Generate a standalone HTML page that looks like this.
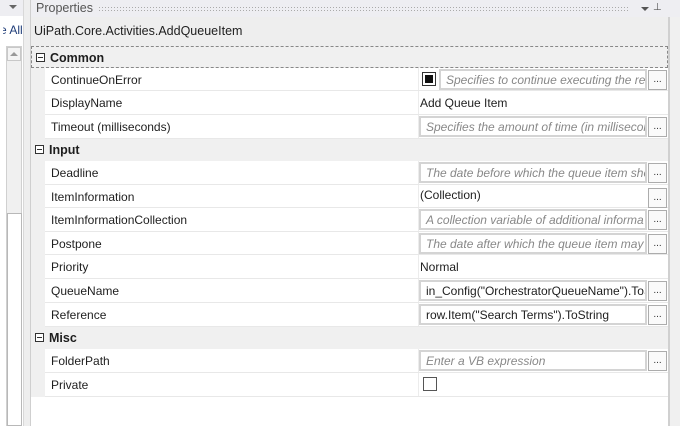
<!DOCTYPE html>
<html><head><style>
*{margin:0;padding:0;box-sizing:border-box}
body{width:680px;height:426px;overflow:hidden;background:#fff;font-family:"Liberation Sans",sans-serif;font-size:12px;color:#1e1e1e;position:relative}
.a{position:absolute}
.row{position:absolute;left:31px;width:637px;}
.hdr{background:#f0f0f0;font-weight:bold;font-size:12.5px}
.hdr .box{position:absolute;left:4px;top:6px;width:9px;height:9px;border:1px solid #333;background:#fff}
.hdr .box:after{content:"";position:absolute;left:1px;top:3px;width:5px;height:1px;background:#333}
.hdr span{position:absolute;left:18px;top:4px}
.prop{background:#fff}
.prop .ind{position:absolute;left:0;top:0;bottom:0;width:14px;background:#f0f0f0}
.prop .name{position:absolute;left:20px;top:5px}
.prop .line{position:absolute;left:14px;right:0;bottom:0;height:1px;background:#e8e8e8}
.prop .sep{position:absolute;left:387px;top:0;bottom:0;width:1px;background:#ececec}
.val{position:absolute;left:389px;top:5px}
.tb{position:absolute;left:388px;top:1px;width:228px;height:21px;border:2px solid #d4d4d4;background:#fff;padding:2px 0 0 5px;white-space:nowrap;overflow:hidden}
.ph{font-style:italic;color:#888}
.btn{position:absolute;left:617px;top:2px;width:19px;height:20px;border:1px solid #acacac;background:#fafafa;font-size:10px;text-align:center;line-height:18px;color:#333}
</style></head><body>
<!-- left panel -->
<div class="a" style="left:0;top:0;width:24px;height:16px;background:#eeeef2"></div>
<div class="a" style="left:9px;top:5px;width:0;height:0;border-left:4px solid transparent;border-right:4px solid transparent;border-top:4px solid #666"></div>
<div class="a" style="left:0;top:23px;font-size:12px;color:#1e3c78">e All</div>
<div class="a" style="left:-5px;top:23px;width:8px;height:14px;background:#fff"></div>
<div class="a" style="left:6px;top:46px;width:16px;height:380px;background:#f0f0f0;border:1px solid #d0d0d0"></div>
<div class="a" style="left:7px;top:47px;width:14px;height:14px;background:#f4f4f4;border:1px solid #c8c8c8"></div>
<div class="a" style="left:10px;top:52px;width:0;height:0;border-left:4px solid transparent;border-right:4px solid transparent;border-bottom:4px solid #999"></div>
<div class="a" style="left:7px;top:213px;width:15px;height:213px;background:#fff;border:1px solid #b8b8b8"></div>
<div class="a" style="left:23px;top:0;width:8px;height:426px;background:#eeeeee;border-left:1px solid #d8d8d8;border-right:1px solid #cfcfcf"></div>
<!-- properties title -->
<div class="a" style="left:31px;top:0;width:649px;height:17px;background:#eeeef2"></div>
<div class="a" style="left:36px;top:1px;font-size:12.5px;color:#555">Properties</div>
<div class="a" style="left:98px;top:6px;width:532px;height:5px;background-image:radial-gradient(#aaa 0.6px,transparent 0.7px);background-size:3px 3px"></div>
<div class="a" style="left:641px;top:7px;width:0;height:0;border-left:4px solid transparent;border-right:4px solid transparent;border-top:4px solid #555"></div>
<div class="a" style="left:653px;top:2px;font-size:10px;color:#555">⊥</div>
<div class="a" style="left:31px;top:17px;width:637px;height:29px;background:#eeeeee"></div>
<div class="a" style="left:34px;top:24px;font-size:12.5px">UiPath.Core.Activities.AddQueueItem</div>
<div class="a" style="left:668px;top:17px;width:2px;height:409px;background:#d0d0d0"></div>
<div class="a" style="left:670px;top:17px;width:10px;height:409px;background:#f0f0f0"></div>

<div class="row hdr" style="top:46px;height:22px;border:1px dashed #888"><div class="box"></div><span>Common</span></div>
<div class="row prop" style="top:68px;height:23px"><div class="ind"></div><div class="name">ContinueOnError</div><div class="sep"></div><div class="line"></div>
<div class="a" style="left:391px;top:4px;width:14px;height:14px;border:1px solid #333;background:#fff"><div style="margin:2px;width:8px;height:8px;background:#111"></div></div>
<div class="tb ph" style="left:408px;width:208px">Specifies to continue executing the ren</div><div class="btn">...</div></div>
<div class="row prop" style="top:91px;height:24px"><div class="ind"></div><div class="name">DisplayName</div><div class="sep"></div><div class="line"></div><div class="val">Add Queue Item</div></div>
<div class="row prop" style="top:115px;height:24px"><div class="ind"></div><div class="name">Timeout (milliseconds)</div><div class="sep"></div><div class="line"></div><div class="tb ph">Specifies the amount of time (in millisecor</div><div class="btn">...</div></div>

<div class="row hdr" style="top:139px;height:22px"><div class="box"></div><span>Input</span></div>
<div class="row prop" style="top:161px;height:24px"><div class="ind"></div><div class="name">Deadline</div><div class="sep"></div><div class="line"></div><div class="tb ph">The date before which the queue item sho</div><div class="btn">...</div></div>
<div class="row prop" style="top:185px;height:23px"><div class="ind"></div><div class="name">ItemInformation</div><div class="sep"></div><div class="line"></div><div class="val" style="top:3px">(Collection)</div><div class="btn" style="top:3px">...</div></div>
<div class="row prop" style="top:208px;height:24px"><div class="ind"></div><div class="name">ItemInformationCollection</div><div class="sep"></div><div class="line"></div><div class="tb ph">A collection variable of additional informa</div><div class="btn">...</div></div>
<div class="row prop" style="top:232px;height:23px"><div class="ind"></div><div class="name">Postpone</div><div class="sep"></div><div class="line"></div><div class="tb ph">The date after which the queue item may</div><div class="btn">...</div></div>
<div class="row prop" style="top:255px;height:24px"><div class="ind"></div><div class="name">Priority</div><div class="sep"></div><div class="line"></div><div class="val">Normal</div></div>
<div class="row prop" style="top:279px;height:24px"><div class="ind"></div><div class="name">QueueName</div><div class="sep"></div><div class="line"></div><div class="tb">in_Config("OrchestratorQueueName").ToS</div><div class="btn">...</div></div>
<div class="row prop" style="top:303px;height:24px"><div class="ind"></div><div class="name">Reference</div><div class="sep"></div><div class="line"></div><div class="tb">row.Item("Search Terms").ToString</div><div class="btn">...</div></div>

<div class="row hdr" style="top:327px;height:22px"><div class="box"></div><span>Misc</span></div>
<div class="row prop" style="top:349px;height:24px"><div class="ind"></div><div class="name">FolderPath</div><div class="sep"></div><div class="line"></div><div class="tb ph">Enter a VB expression</div><div class="btn">...</div></div>
<div class="row prop" style="top:373px;height:24px"><div class="ind"></div><div class="name">Private</div><div class="sep"></div><div class="line"></div>
<div class="a" style="left:392px;top:4px;width:14px;height:14px;border:1px solid #555;background:#fff"></div></div>
</body></html>
